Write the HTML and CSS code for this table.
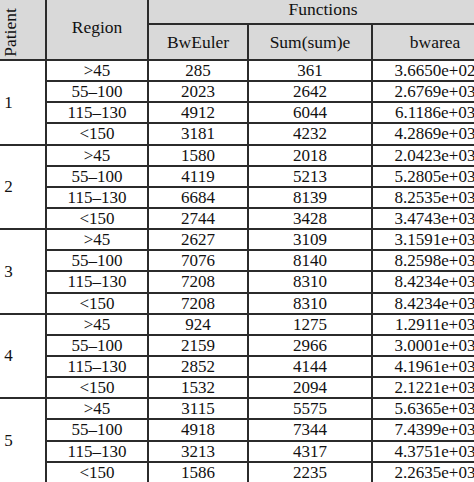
FILE: index.html
```html
<!DOCTYPE html>
<html>
<head>
<meta charset="utf-8">
<link rel="stylesheet" href="styles.css">
</head>
<body>
<div class="frame">
<table class="grid">
<colgroup>
<col class="c-pat"><col class="c-reg"><col class="c-bw"><col class="c-sum"><col class="c-area">
</colgroup>
<thead>
<tr class="h1">
<th rowspan="2" class="pat-h"><span class="rot">Patient</span></th>
<th rowspan="2">Region</th>
<th colspan="3">Functions</th>
</tr>
<tr class="h2">
<th>BwEuler</th><th>Sum(sum)e</th><th>bwarea</th>
</tr>
</thead>
<tbody>
<tr><td rowspan="4" class="pat">1</td><td>&gt;45</td><td>285</td><td>361</td><td>3.6650e+02</td></tr>
<tr><td>55–100</td><td>2023</td><td>2642</td><td>2.6769e+03</td></tr>
<tr><td>115–130</td><td>4912</td><td>6044</td><td>6.1186e+03</td></tr>
<tr><td>&lt;150</td><td>3181</td><td>4232</td><td>4.2869e+03</td></tr>
<tr><td rowspan="4" class="pat">2</td><td>&gt;45</td><td>1580</td><td>2018</td><td>2.0423e+03</td></tr>
<tr><td>55–100</td><td>4119</td><td>5213</td><td>5.2805e+03</td></tr>
<tr><td>115–130</td><td>6684</td><td>8139</td><td>8.2535e+03</td></tr>
<tr><td>&lt;150</td><td>2744</td><td>3428</td><td>3.4743e+03</td></tr>
<tr><td rowspan="4" class="pat">3</td><td>&gt;45</td><td>2627</td><td>3109</td><td>3.1591e+03</td></tr>
<tr><td>55–100</td><td>7076</td><td>8140</td><td>8.2598e+03</td></tr>
<tr><td>115–130</td><td>7208</td><td>8310</td><td>8.4234e+03</td></tr>
<tr><td>&lt;150</td><td>7208</td><td>8310</td><td>8.4234e+03</td></tr>
<tr><td rowspan="4" class="pat">4</td><td>&gt;45</td><td>924</td><td>1275</td><td>1.2911e+03</td></tr>
<tr><td>55–100</td><td>2159</td><td>2966</td><td>3.0001e+03</td></tr>
<tr><td>115–130</td><td>2852</td><td>4144</td><td>4.1961e+03</td></tr>
<tr><td>&lt;150</td><td>1532</td><td>2094</td><td>2.1221e+03</td></tr>
<tr><td rowspan="4" class="pat">5</td><td>&gt;45</td><td>3115</td><td>5575</td><td>5.6365e+03</td></tr>
<tr><td>55–100</td><td>4918</td><td>7344</td><td>7.4399e+03</td></tr>
<tr><td>115–130</td><td>3213</td><td>4317</td><td>4.3751e+03</td></tr>
<tr><td>&lt;150</td><td>1586</td><td>2235</td><td>2.2635e+03</td></tr>
</tbody>
</table>
</div>
</body>
</html>
```
FILE: styles.css
```css
html, body {
  margin: 0;
  padding: 0;
  background: #fff;
}
.frame {
  width: 474px;
  height: 482px;
  overflow: hidden;
}
.grid {
  margin: -7px 0 0 -30px;
  border-collapse: collapse;
  table-layout: fixed;
  width: 527px;
  font-family: "Liberation Serif", "Times New Roman", serif;
  font-size: 17px;
  color: #111;
}
.c-pat { width: 75px; }
.c-reg { width: 102px; }
.c-bw { width: 100px; }
.c-sum { width: 124px; }
.c-area { width: 126px; }
.grid th, .grid td {
  border: 2px solid #2b2b2b;
  padding: 0;
  text-align: center;
  vertical-align: middle;
  line-height: 17px;
  white-space: nowrap;
}
.grid th {
  background: #d9d9d9;
  font-weight: normal;
  font-size: 17.5px;
}
.h1 { height: 30px; }
.h2 { height: 36px; }
.grid tbody tr { height: 21.15px; }
.grid th.pat-h {
  padding: 10px 0 0 4px;
}
.rot {
  display: inline-block;
  transform: rotate(-90deg);
}
.pat {
  text-align: center;
}
```
